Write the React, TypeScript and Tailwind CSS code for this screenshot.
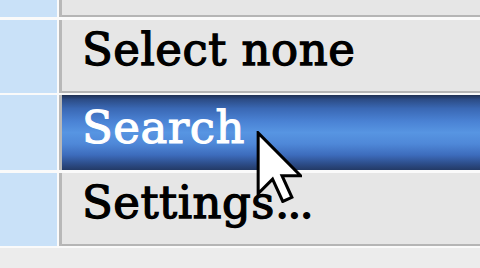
import React from "react";

function Label({ text, white }: { text: string; white?: boolean }) {
  const dots = text.endsWith("...");
  const main = dots ? text.slice(0, -3) : text;
  return (
    <span
      className={`font-['DejaVu_Serif',serif] text-[45px] leading-none tracking-[0.5px] ${
        white
          ? "text-white [-webkit-text-stroke:1.1px_white]"
          : "text-black [-webkit-text-stroke:1.3px_black]"
      }`}
    >
      {main}
      {dots && <span className="tracking-[-2px]">...</span>}
    </span>
  );
}

function Row({
  h,
  label,
  active,
}: {
  h: string;
  label?: string;
  active?: boolean;
}) {
  return (
    <div className={`flex ${h}`}>
      <div className="w-[57px] shrink-0 bg-[#c9e1f8]" />
      <div className="w-[2px] shrink-0 bg-[#fafafa]" />
      <div className="w-[3px] shrink-0 bg-[#b8b8b8]" />
      {active ? (
        <div className="relative flex flex-1 items-center pl-[20px] pb-[10px] bg-[linear-gradient(to_bottom,#1f3052_0%,#2c4c86_6%,#3a68b4_18%,#4a82d4_35%,#5795e2_50%,#4f88d8_65%,#3d6cbc_80%,#2c4c88_92%,#233a66_100%)]">
          {label && <Label text={label} white />}
        </div>
      ) : (
        <div className="flex flex-1 items-center pl-[20px] pb-[12px] bg-[#e6e6e6] border-b-2 border-[#b5b5b5]">
          {label && <Label text={label} />}
        </div>
      )}
    </div>
  );
}

export default function App() {
  return (
    <div className="relative w-[480px] h-[268px] overflow-hidden bg-[#fafafa] flex flex-col">
      <Row h="h-[17px]" />
      <div className="h-[3px]" />
      <Row h="h-[73px]" label="Select none" />
      <div className="h-[2px]" />
      <Row h="h-[75px]" label="Search" active />
      <div className="h-[3px]" />
      <Row h="h-[73px]" label="Settings..." />
      <div className="h-[2px]" />
      <div className="flex-1 bg-[#ececec]" />
      <svg
        className="absolute left-[256px] top-[131px]"
        width="46"
        height="72"
        viewBox="0 0 12 19"
      >
        <polygon
          points="0.5,0.5 0.5,16.5 4.3,12.7 7,18.6 9.4,17.5 6.8,11.8 11.7,11.8"
          fill="white"
          stroke="black"
          strokeWidth="0.8"
          strokeLinejoin="miter"
        />
      </svg>
    </div>
  );
}
